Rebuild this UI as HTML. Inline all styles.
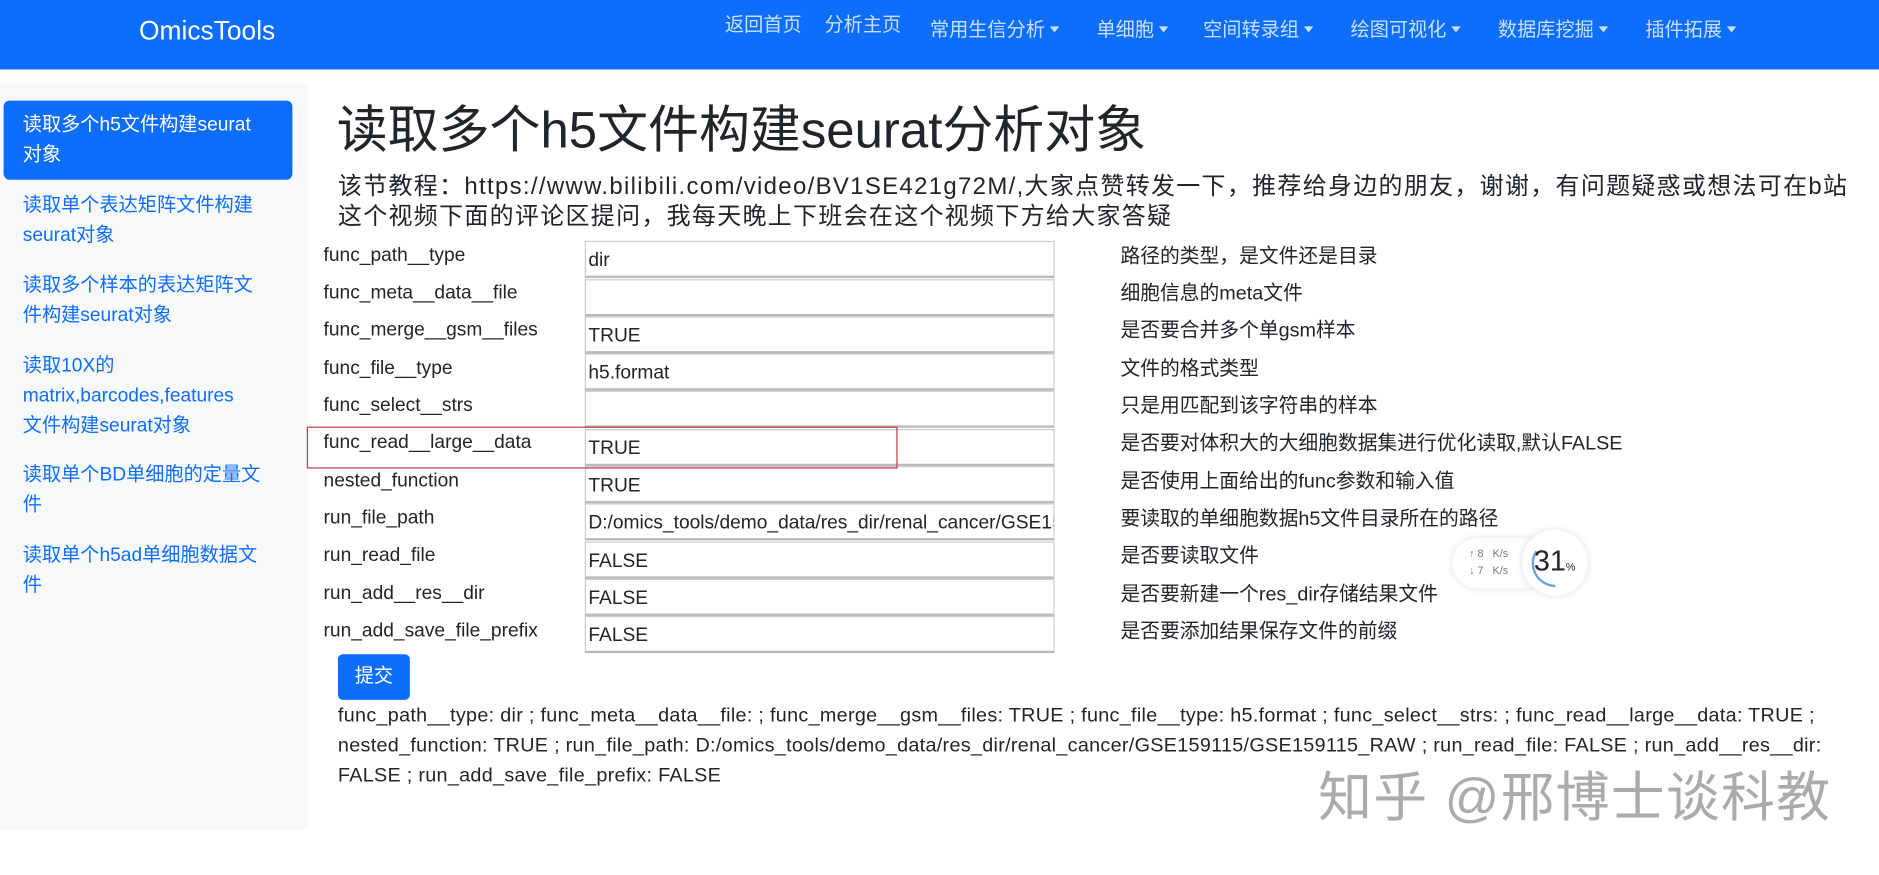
<!DOCTYPE html>
<html><head><meta charset="utf-8">
<style>
html,body{margin:0;padding:0;background:#fff;overflow:hidden;width:1879px;height:874px}
#w{position:absolute;left:0;top:0;width:1568px;height:730px;transform:scale(1.19834);transform-origin:0 0;font-family:"Liberation Sans","Noto Sans CJK SC",sans-serif;color:#212529}
.a{position:absolute;white-space:nowrap}
.nav{position:absolute;left:0;top:0;width:1568px;height:58px;background:#0d6efd}
.ni{position:absolute;color:rgba(255,255,255,.78);font-size:16px;line-height:20px}
.car::after{content:"";display:inline-block;margin-left:4px;vertical-align:3px;border-top:5px solid rgba(255,255,255,.78);border-left:4px solid transparent;border-right:4px solid transparent}
.side{position:absolute;left:0;top:70px;width:257px;height:622px;background:#f8f9fa}
.si{position:absolute;left:19px;color:#0d6efd;font-size:16px;line-height:25px;white-space:nowrap}
.lbl{position:absolute;left:270px;font-size:16px;line-height:20px}
.inp{position:absolute;left:488px;width:392px;height:31px;border:1px solid #ccc;border-bottom:2px solid #bbb;box-sizing:border-box;font-size:16px;line-height:31px;padding-left:2px;overflow:hidden;white-space:nowrap}
.d{position:absolute;left:935px;font-size:16.5px;line-height:20px}
</style></head><body><div id="w">
<div class="nav"></div>
<div class="a" style="left:116px;top:13px;color:#fff;font-size:22px;line-height:26px">OmicsTools</div>
<div class="ni" style="left:605px;top:12px">返回首页</div>
<div class="ni" style="left:688px;top:12px">分析主页</div>
<div class="ni car" style="left:776px;top:16px">常用生信分析</div>
<div class="ni car" style="left:915px;top:16px">单细胞</div>
<div class="ni car" style="left:1004px;top:16px">空间转录组</div>
<div class="ni car" style="left:1127px;top:16px">绘图可视化</div>
<div class="ni car" style="left:1250px;top:16px">数据库挖掘</div>
<div class="ni car" style="left:1373px;top:16px">插件拓展</div>

<div class="side"></div>
<div class="a" style="left:3px;top:84px;width:241px;height:66px;background:#0d6efd;border-radius:5px"></div>
<div class="si" style="top:92px;color:#fff">读取多个h5文件构建seurat<br>对象</div>
<div class="si" style="top:159px">读取单个表达矩阵文件构建<br>seurat对象</div>
<div class="si" style="top:226px">读取多个样本的表达矩阵文<br>件构建seurat对象</div>
<div class="si" style="top:293px">读取10X的<br>matrix,barcodes,features<br>文件构建seurat对象</div>
<div class="si" style="top:384px">读取单个BD单细胞的定量文<br>件</div>
<div class="si" style="top:451px">读取单个h5ad单细胞数据文<br>件</div>

<div class="a" style="left:281px;top:84px;font-size:42.5px;line-height:52px">读取多个h5文件构建seurat分析对象</div>
<div class="a" style="left:282px;top:144px;font-size:20px;line-height:25px;letter-spacing:1.1px">该节教程：https://www.bilibili.com/video/BV1SE421g72M/,大家点赞转发一下，推荐给身边的朋友，谢谢，有问题疑惑或想法可在b站<br>这个视频下面的评论区提问，我每天晚上下班会在这个视频下方给大家答疑</div>

<div class="lbl" style="top:204px">func_path__type</div><div class="inp" style="top:201px">dir</div><div class="d" style="top:204px">路径的类型，是文件还是目录</div>
<div class="lbl" style="top:235px">func_meta__data__file</div><div class="inp" style="top:233px"></div><div class="d" style="top:235px">细胞信息的meta文件</div>
<div class="lbl" style="top:266px">func_merge__gsm__files</div><div class="inp" style="top:264px">TRUE</div><div class="d" style="top:266px">是否要合并多个单gsm样本</div>
<div class="lbl" style="top:298px">func_file__type</div><div class="inp" style="top:295px">h5.format</div><div class="d" style="top:298px">文件的格式类型</div>
<div class="lbl" style="top:329px">func_select__strs</div><div class="inp" style="top:326px"></div><div class="d" style="top:329px">只是用匹配到该字符串的样本</div>
<div class="lbl" style="top:360px">func_read__large__data</div><div class="inp" style="top:358px">TRUE</div><div class="d" style="top:360px">是否要对体积大的大细胞数据集进行优化读取,默认FALSE</div>
<div class="lbl" style="top:392px">nested_function</div><div class="inp" style="top:389px">TRUE</div><div class="d" style="top:392px">是否使用上面给出的func参数和输入值</div>
<div class="lbl" style="top:423px">run_file_path</div><div class="inp" style="top:420px">D:/omics_tools/demo_data/res_dir/renal_cancer/GSE159115/GSE159115_RAW</div><div class="d" style="top:423px">要读取的单细胞数据h5文件目录所在的路径</div>
<div class="lbl" style="top:454px">run_read_file</div><div class="inp" style="top:452px">FALSE</div><div class="d" style="top:454px">是否要读取文件</div>
<div class="lbl" style="top:486px">run_add__res__dir</div><div class="inp" style="top:483px">FALSE</div><div class="d" style="top:486px">是否要新建一个res_dir存储结果文件</div>
<div class="lbl" style="top:517px">run_add_save_file_prefix</div><div class="inp" style="top:514px">FALSE</div><div class="d" style="top:517px">是否要添加结果保存文件的前缀</div>

<div class="a" style="left:256px;top:356px;width:493px;height:35px;border:1px solid #c0393b;box-sizing:border-box"></div>

<div class="a" style="left:282px;top:546px;width:60px;height:38px;background:#0d6efd;border-radius:4px;color:#fff;font-size:16px;line-height:38px;text-align:center">提交</div>
<div class="a" style="left:282px;top:585px;font-size:16.5px;line-height:25px;letter-spacing:0.25px">func_path__type: dir ; func_meta__data__file: ; func_merge__gsm__files: TRUE ; func_file__type: h5.format ; func_select__strs: ; func_read__large__data: TRUE ;<br>nested_function: TRUE ; run_file_path: D:/omics_tools/demo_data/res_dir/renal_cancer/GSE159115/GSE159115_RAW ; run_read_file: FALSE ; run_add__res__dir:<br>FALSE ; run_add_save_file_prefix: FALSE</div>

<div class="a" style="left:1212px;top:449px;width:80px;height:42px;background:#fff;border-radius:21px;box-shadow:0 0 6px rgba(0,0,0,.12)"></div>
<div class="a" style="left:1226px;top:455px;font-size:9px;line-height:14px;color:#777"><span style="color:#3b82f6">↑</span> 8 &nbsp; K/s<br><span style="color:#3a9a5a">↓</span> 7 &nbsp; K/s</div>
<div class="a" style="left:1270px;top:442px;width:55px;height:55px;border-radius:50%;background:#fff;box-shadow:0 0 6px rgba(0,0,0,.12)"></div>
<svg class="a" style="left:1270px;top:442px" width="55" height="55"><path d="M12 18 A19 19 0 0 0 28 47" fill="none" stroke="#6aa4e6" stroke-width="2"/></svg>
<div class="a" style="left:1280px;top:454px;font-size:24px;line-height:30px">31<span style="font-size:9px">%</span></div>

<div class="a" style="left:1100px;top:638px;font-size:45px;line-height:56px;color:#ababab;letter-spacing:1px">知乎 @邢博士谈科教</div>
</div></body></html>
